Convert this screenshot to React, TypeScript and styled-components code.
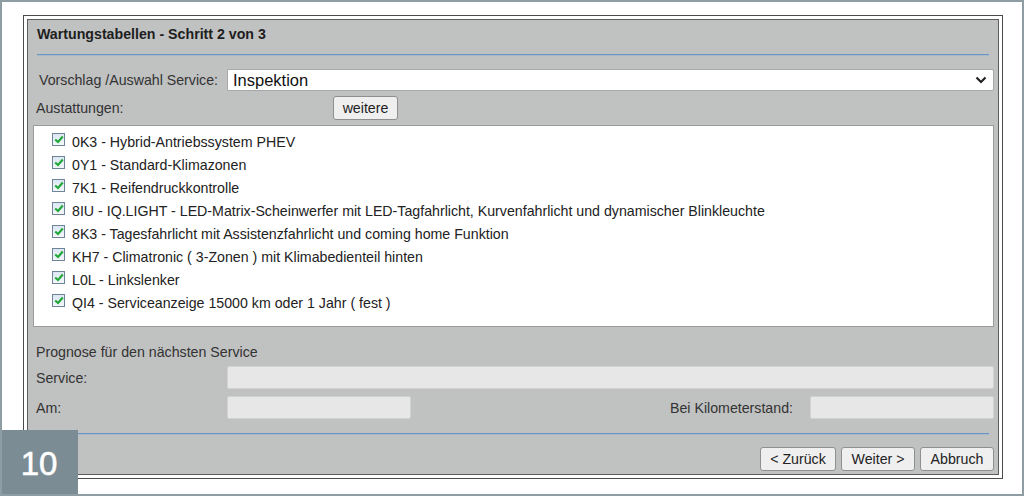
import React from 'react';
import styled, { createGlobalStyle } from 'styled-components';

const GlobalStyle = createGlobalStyle`
  body {
    margin: 0;
    font-family: "Liberation Sans", Arial, sans-serif;
    background: #fff;
  }
`;

const Frame = styled.div`
  position: relative;
  width: 1024px;
  height: 496px;
  box-sizing: border-box;
  border: 2px solid #8e9ca4;
  background: #fff;
  padding: 13px 0 0 21px;
  overflow: hidden;
`;

const Dialog = styled.div`
  width: 980px;
  height: 464px;
  box-sizing: border-box;
  border: 1px solid #4a4a4a;
  padding: 3px;
  background: #fff;
`;

const Panel = styled.div`
  height: 100%;
  box-sizing: border-box;
  border: 1px solid #5c5c5c;
  background: #c0c1c1;
  padding: 0 4px 0 5px;
  display: flex;
  flex-direction: column;
  color: #333;
  font-size: 14.2px;
`;

const Title = styled.div`
  margin: 6px 0 0 4px;
  line-height: 16px;
  font-size: 14.2px;
  font-weight: bold;
  color: #1e1e1e;
`;

const Rule = styled.div<{ $top: number }>`
  margin: ${(p) => p.$top}px 5px 0 4px;
  height: 1px;
  background: #6a96c6;
  border-bottom: 1px solid #a9b9c9;
`;

const FormRow = styled.div<{ $top: number }>`
  display: grid;
  grid-template-columns: 194px 1fr;
  align-items: center;
  margin-top: ${(p) => p.$top}px;
`;

const Label = styled.span<{ $indent?: number }>`
  padding-left: ${(p) => p.$indent ?? 3}px;
  white-space: nowrap;
`;

const SelectBox = styled.div`
  height: 22px;
  box-sizing: border-box;
  background: #fff;
  border: 1px solid #a8a8a8;
  border-radius: 2px;
  display: flex;
  align-items: center;
  padding: 0 6px 0 5px;
  font-size: 16.5px;
  color: #111;
  justify-content: space-between;
`;

const ToolRow = styled.div`
  display: flex;
  align-items: center;
  margin-top: 5px;
`;

const Button = styled.button<{ $w: number }>`
  width: ${(p) => p.$w}px;
  height: 24px;
  box-sizing: border-box;
  background: #efefef;
  border: 1px solid #8f8f8f;
  border-radius: 3px;
  font-family: "Liberation Sans", Arial, sans-serif;
  font-size: 14.2px;
  color: #222;
  padding: 0;
`;

const ListBox = styled.div`
  margin-top: 5px;
  height: 202px;
  box-sizing: border-box;
  background: #fff;
  border: 1px solid #9c9c9c;
  padding: 4px 0 0 18px;
`;

const Item = styled.div`
  height: 23px;
  display: flex;
  align-items: center;
  gap: 7px;
  font-size: 14.2px;
  color: #222;
`;

const Check = styled.span`
  width: 13px;
  height: 13px;
  box-sizing: border-box;
  margin-top: -5px;
  border: 1px solid #6f8499;
  background: linear-gradient(#dce7f2, #f3f7fb);
  display: flex;
  align-items: center;
  justify-content: center;
`;

const Heading = styled.div`
  margin: 16px 0 0 3px;
  line-height: 18px;
`;

const Field = styled.div<{ $w?: number }>`
  height: 23px;
  width: ${(p) => (p.$w ? `${p.$w}px` : 'auto')};
  box-sizing: border-box;
  background: #e7e7e7;
  border: 1px solid #d2d2d2;
  border-radius: 2px;
`;

const DateRow = styled.div`
  display: grid;
  grid-template-columns: 194px 184px 1fr 184px;
  align-items: center;
  margin-top: 7px;
`;

const RightLabel = styled.span`
  text-align: right;
  padding-right: 17px;
`;

const ButtonBar = styled.div`
  display: flex;
  justify-content: flex-end;
  gap: 5px;
  margin-top: 12px;
`;

const Badge = styled.div`
  position: absolute;
  left: -2px;
  bottom: -2px;
  width: 78px;
  height: 66px;
  background: #7b8c94;
  color: #fff;
  font-size: 33px;
  display: flex;
  align-items: center;
  justify-content: center;
  padding-top: 2px;
  box-sizing: border-box;
  -webkit-text-stroke: 0.6px #fff;
`;

const items = [
  '0K3 - Hybrid-Antriebssystem PHEV',
  '0Y1 - Standard-Klimazonen',
  '7K1 - Reifendruckkontrolle',
  '8IU - IQ.LIGHT - LED-Matrix-Scheinwerfer mit LED-Tagfahrlicht, Kurvenfahrlicht und dynamischer Blinkleuchte',
  '8K3 - Tagesfahrlicht mit Assistenzfahrlicht und coming home Funktion',
  'KH7 - Climatronic ( 3-Zonen ) mit Klimabedienteil hinten',
  'L0L - Linkslenker',
  'QI4 - Serviceanzeige 15000 km oder 1 Jahr ( fest )',
];

const App: React.FC = () => {
  return (
    <>
      <GlobalStyle />
      <Frame>
        <Dialog>
          <Panel>
            <Title>Wartungstabellen - Schritt 2 von 3</Title>
            <Rule $top={12} />
            <FormRow $top={13}>
              <Label $indent={6}>Vorschlag /Auswahl Service:</Label>
              <SelectBox>
                <span>Inspektion</span>
                <svg width="12" height="8" viewBox="0 0 12 8">
                  <path d="M1.5 1.5 L6 6 L10.5 1.5" fill="none" stroke="#222" strokeWidth="2.2" />
                </svg>
              </SelectBox>
            </FormRow>
            <ToolRow>
              <Label style={{ width: 297 }}>Austattungen:</Label>
              <Button $w={65}>weitere</Button>
            </ToolRow>
            <ListBox>
              {items.map((t) => (
                <Item key={t}>
                  <Check>
                    <svg width="10" height="9" viewBox="0 0 10 9">
                      <path d="M1.2 4.5 L4 7 L8.8 1.5" fill="none" stroke="#22a838" strokeWidth="2.2" />
                    </svg>
                  </Check>
                  <span>{t}</span>
                </Item>
              ))}
            </ListBox>
            <Heading>Prognose für den nächsten Service</Heading>
            <FormRow $top={5}>
              <Label>Service:</Label>
              <Field />
            </FormRow>
            <DateRow>
              <Label>Am:</Label>
              <Field $w={184} />
              <RightLabel>Bei Kilometerstand:</RightLabel>
              <Field $w={184} />
            </DateRow>
            <Rule $top={14} />
            <ButtonBar>
              <Button $w={76}>&lt; Zurück</Button>
              <Button $w={74}>Weiter &gt;</Button>
              <Button $w={74}>Abbruch</Button>
            </ButtonBar>
          </Panel>
        </Dialog>
        <Badge>10</Badge>
      </Frame>
    </>
  );
};

export default App;
